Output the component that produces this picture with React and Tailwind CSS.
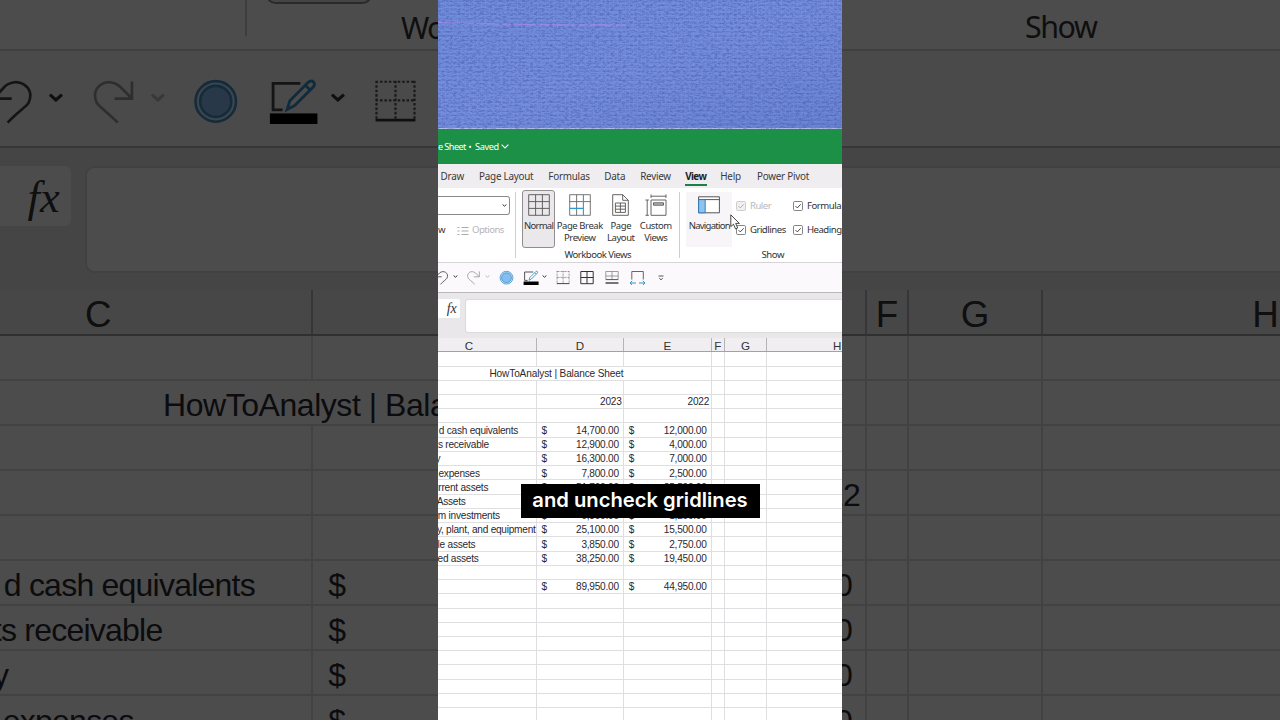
import React from "react";

const ROWS = [
  [],
  ["title"],
  [],
  ["year"],
  [],
  ["d cash equivalents", "14,700.00", "12,000.00"],
  ["ts receivable", "12,900.00", "4,000.00"],
  ["ry", "16,300.00", "7,000.00"],
  ["d expenses", "7,800.00", "2,500.00"],
  ["urrent assets", "51,700.00", "25,500.00"],
  ["m Assets"],
  ["rm investments", "9,300.00", "1,200.00"],
  ["y, plant, and equipment", "25,100.00", "15,500.00"],
  ["le assets", "3,850.00", "2,750.00"],
  ["xed assets", "38,250.00", "19,450.00"],
  [],
  ["", "89,950.00", "44,950.00"],
  [], [], [], [], [], [], [], [], [], [],
];

const LABEL_END = {
  5: "pr-[17.7px]",
  6: "pr-[46.9px]",
  7: "pr-[95.6px]",
  8: "pr-[56px]",
  9: "pr-[47.6px]",
  10: "pr-[70.2px]",
  11: "pr-[36px]",
  12: "pr-[0.2px]",
  13: "pr-[60.5px]",
  14: "pr-[57.2px]",
};

const LINE = "border-[#dfdee1]";

function Money({ value }) {
  return (
    <div className="flex w-full justify-between pl-[4.8px] pr-[4.2px]">
      {value && <span>$</span>}
      {value && <span>{value}</span>}
    </div>
  );
}

function Row({ index, cells }) {
  const kind = cells[0];
  return (
    <div className={"flex h-[14.24px] shrink-0 border-b-[0.7px] " + LINE}>
      {kind === "title" ? (
        <div className="flex w-[186px] shrink-0 items-center justify-end pt-[1.6px] pr-[0.6px] whitespace-nowrap">
          <span className="tracking-[-0.14px]">HowToAnalyst | Balance Sheet</span>
        </div>
      ) : (
        <>
          <div className={"flex w-[98.8px] shrink-0 items-center justify-end whitespace-nowrap border-r-[0.7px] pt-[1.6px] " + LINE + " " + (LABEL_END[index] || "")}>
            {kind !== "year" && <span className="shrink-0">{kind}</span>}
          </div>
          <div className={"flex w-[87.2px] shrink-0 items-center border-r-[0.7px] pt-[1.6px] " + LINE}>
            {kind === "year" ? <span className="ml-auto pr-[1.4px]">2023</span> : <Money value={cells[1]} />}
          </div>
        </>
      )}
      <div className={"flex w-[87.8px] shrink-0 items-center border-r-[0.7px] pt-[1.6px] " + LINE}>
        {kind === "year" ? <span className="ml-auto pr-[1.7px]">2022</span> : <Money value={cells[2]} />}
      </div>
      <div className={"w-[13px] shrink-0 border-r-[0.7px] " + LINE} />
      <div className={"w-[42.5px] shrink-0 border-r-[0.7px] " + LINE} />
      <div className="grow" />
    </div>
  );
}

function Head({ children, className }) {
  return (
    <div className={"flex h-full shrink-0 items-center justify-center border-r-[0.7px] border-[#b5b3b7] pt-[2.2px] " + className}>
      {children}
    </div>
  );
}

function Fabric({ id }) {
  return (
    <svg className="block h-[128.5px] w-full shrink-0" viewBox="0 0 404 128.5" preserveAspectRatio="none">
      <defs>
        <linearGradient id={id + "g"} x1="0" y1="0" x2="1" y2="1">
          <stop offset="0" stopColor="#718ddc" />
          <stop offset="0.5" stopColor="#768ede" />
          <stop offset="1" stopColor="#6b84d3" />
        </linearGradient>
        <filter id={id + "n"} x="0" y="0" width="100%" height="100%" colorInterpolationFilters="sRGB">
          <feTurbulence type="fractalNoise" baseFrequency="0.26 0.6" numOctaves="3" seed="7" />
          <feColorMatrix values="0 0 0 0 0.24  0 0 0 0 0.3  0 0 0 0 0.63  4 0 0 0 -1.8" />
        </filter>
        <pattern id={id + "w"} width="4" height="4.4" patternUnits="userSpaceOnUse">
          <path d="M0 1h3" stroke="#3e51a4" strokeWidth="0.9" opacity="0.4" />
        </pattern>
      </defs>
      <rect width="404" height="128.5" fill={"url(#" + id + "g)"} />
      <rect width="404" height="128.5" fill={"url(#" + id + "w)"} />
      <rect width="404" height="128.5" filter={"url(#" + id + "n)"} opacity="0.34" />
      <path d="M0 22.5l60 1.5 70 1 60 0" fill="none" stroke="#b08ae6" strokeWidth="1.3" strokeDasharray="22 4 9 3" opacity="0.6" />
    </svg>
  );
}

function Chevron({ className, color = "#333" }) {
  return (
    <svg className={"shrink-0 " + className} viewBox="0 0 5 3" fill="none" stroke={color} strokeWidth="1">
      <path d="M0.6 0.5L2.5 2.2L4.4 0.5" />
    </svg>
  );
}

function Check({ label, muted }) {
  return (
    <div className={"flex h-[12px] items-center gap-[3.6px] whitespace-nowrap text-[9.6px] tracking-[-0.48px] " + (muted ? "text-[#b9b7ba]" : "text-[#333]")}>
      <svg className="size-[10px] shrink-0" viewBox="0 0 10 10" fill="none">
        <rect x="0.5" y="0.5" width="9" height="9" rx="1.2" fill={muted ? "#f1f0f1" : "#fff"} stroke={muted ? "#c4c2c5" : "#666"} strokeWidth="0.8" />
        <path d="M2.5 5.1l1.8 1.8 3.4-3.6" stroke={muted ? "#aaa" : "#333"} strokeWidth="0.9" />
      </svg>
      {label}
    </div>
  );
}

function BigButton({ icon, lines, tight, className }) {
  return (
    <div className={"flex shrink-0 flex-col items-center whitespace-nowrap text-center text-[9.5px] leading-[12px] text-[#333] " + (tight ? "tracking-[-0.72px] " : "tracking-[-0.42px] ") + className}>
      <div className="flex h-[24px] items-center justify-center">{icon}</div>
      <div className="mt-[3px] flex flex-col items-center">
        {lines.map((l) => (
          <span key={l}>{l}</span>
        ))}
      </div>
    </div>
  );
}

const gridIcon = (
  <svg className="h-[22px] w-[22px]" viewBox="0 0 22 22" fill="none" stroke="#555" strokeWidth="0.9">
    <path d="M0.7 0.7h20.6v20.6H0.7zM7.6 0.7v20.6M14.4 0.7v20.6M0.7 7.6h20.6M0.7 14.4h20.6" />
  </svg>
);
const breakIcon = (
  <svg className="h-[22px] w-[22px]" viewBox="0 0 22 22" fill="none" strokeWidth="0.9">
    <path d="M0.7 0.7h20.6v20.6H0.7zM7.6 0.7v13.7M0.7 7.6h13.7M14.4 7.6h6.9M7.6 14.4v6.9" stroke="#666" />
    <path d="M14.4 0.7v20.6M0.7 14.4h13.7" stroke="#2f9ad0" strokeWidth="1.1" />
  </svg>
);
const pageIcon = (
  <svg className="h-[22px] w-[17px]" viewBox="0 0 17 22" fill="none" stroke="#555" strokeWidth="0.9">
    <path d="M0.7 0.7h10l5.6 5.6v15H0.7zM10.7 0.7v5.6h5.6M3.4 9h10v9.4h-10zM3.4 12.1h10M3.4 15.2h10M8.4 9v9.4" />
  </svg>
);
const customIcon = (
  <svg className="h-[22px] w-[22px]" viewBox="0 0 22 22" fill="none" stroke="#555" strokeWidth="0.9">
    <path d="M6 2.2h15M6 0.5v3.4M21 0.5v3.4M2.2 6v15.3M0.5 6h3.4M0.5 21.3h3.4M6 6h15v15.3H6z" />
    <path d="M8.5 8.8h10v2.4h-10z" fill="#bbb" />
  </svg>
);
const navIcon = (
  <svg className="h-[18px] w-[22px]" viewBox="0 0 22 18" fill="none" stroke="#444" strokeWidth="0.9">
    <path d="M0.6 0.8h20.8v16H0.6zM0.6 3.6h20.8" fill="#fff" />
    <path d="M0.6 3.6h6.6v13.2H0.6z" fill="#8dc3ee" stroke="#2a77b8" />
  </svg>
);

function QuickAccess() {
  const icon = "h-[15px] shrink-0";
  return (
    <div className="flex h-[30.5px] shrink-0 items-center border-b-[0.9px] border-[#bcbabd] bg-[#fbf9fc] pt-[1.2px]">
      <svg className={icon + " w-[10.5px]"} viewBox="0 0 10.5 15" fill="none" stroke="#444" strokeWidth="0.85">
        <path d="M-2 6.8H3.7M-2 6.8L1.5 3C5.3 -0.4 11.5 3 9 8.2C8.6 9 4.5 12 2.4 14.4" />
      </svg>
      <Chevron className="mb-[1.8px] ml-[4.7px] h-[3px] w-[5px]" />
      <svg className={icon + " ml-[9.3px] w-[13px]"} viewBox="0 0 13 15" fill="none" stroke="#999" strokeWidth="0.85">
        <path d="M12.3 1.4V6.8H6.8M12.3 6.8L8.5 3C4.6 -0.4 -1.2 3 1.2 8.2C1.7 9.2 5.6 12 7.8 14.4" />
      </svg>
      <Chevron className="mb-[1.8px] ml-[5px] h-[3px] w-[5px]" color="#bbb" />
      <svg className="ml-[8.1px] size-[15px] shrink-0" viewBox="0 0 15 15" fill="none" stroke="#3f8fcb">
        <circle cx="7.5" cy="7.7" r="6.4" fill="#cfe6f8" strokeWidth="0.8" />
        <circle cx="7.5" cy="7.7" r="4.9" fill="#85bdf0" strokeWidth="0.8" />
      </svg>
      <svg className={icon + " ml-[9.1px] w-[16px]"} viewBox="0 0 16 15" fill="none">
        <path d="M10.2 2H1.6v8.4h3" stroke="#444" strokeWidth="0.9" />
        <path d="M6 10.3l0.9-2.8 6-6c1.2-0.7 2.2 0.4 1.5 1.5l-6 6zM11.8 2.6l1.5 1.5" fill="#fff" stroke="#3a92c8" strokeWidth="0.9" />
        <rect x="0.6" y="11.5" width="15" height="3.5" fill="#000" />
      </svg>
      <Chevron className="mb-[1.8px] ml-[3.5px] h-[3px] w-[5px]" />
      <svg className={icon + " ml-[8.4px] w-[14px]"} viewBox="0 0 14 15" fill="none" stroke="#555">
        <path d="M0.8 1.5h12.6M1.1 1.2v12M7.1 1.2v12M13.1 1.2v12M0.8 7.4h12.6" strokeWidth="0.7" strokeDasharray="0.8 0.6" />
        <path d="M0.8 13.6h12.6" stroke="#333" strokeWidth="0.9" />
      </svg>
      <svg className={icon + " ml-[10.6px] w-[14px]"} viewBox="0 0 14 15" fill="none" stroke="#333" strokeWidth="1">
        <path d="M0.8 1.5h12.4v12.2H0.8zM7 1.5v12.2M0.8 7.5h12.4" />
      </svg>
      <svg className={icon + " ml-[10.8px] w-[14px]"} viewBox="0 0 14 15" fill="none" stroke="#777">
        <path d="M0.8 1.5h12.4v8M0.8 1.5v8M7 1.5v8M0.8 6h12.4" strokeWidth="0.7" />
        <path d="M0.8 9.6h12.4" stroke="#555" strokeWidth="1" />
        <path d="M0.5 13h13" stroke="#666" strokeWidth="1.8" />
      </svg>
      <svg className={icon + " ml-[9.7px] w-[17px]"} viewBox="0 0 17 15" fill="none">
        <path d="M2.8 9.5V1.5h11.5v8" stroke="#555" strokeWidth="0.9" />
        <path d="M1 13h6M3.2 10.9L1 13l2.2 2.1M10 13h6M13.8 10.9L16 13l-2.2 2.1" stroke="#3296c8" strokeWidth="1" />
      </svg>
      <svg className="ml-[12.6px] h-[6px] w-[6px] shrink-0" viewBox="0 0 6 6" fill="none" stroke="#444" strokeWidth="0.9">
        <path d="M0.5 1h5M1.2 3.1L3 4.8l1.8-1.7" />
      </svg>
    </div>
  );
}

const TABS = [
  ["Draw", "ml-[3px] w-[22.5px]"],
  ["Page Layout", "ml-[15.5px] w-[54.5px]"],
  ["Formulas", "ml-[15.5px] w-[40px]"],
  ["Data", "ml-[15.5px] w-[20.5px]"],
  ["Review", "ml-[15px] w-[31px]"],
  ["View", "ml-[14px] w-[21.5px]"],
  ["Help", "ml-[14px] w-[20px]"],
  ["Power Pivot", "ml-[16.5px] w-[52px]"],
];

function Screen({ id, children }) {
  return (
    <div className="relative flex h-[720px] w-[404px] shrink-0 flex-col overflow-hidden bg-white font-['Noto_Sans',sans-serif] text-[#333]">
      <Fabric id={id} />
      <div className="flex h-[35.5px] shrink-0 items-center bg-[#1b9046] pt-[1.4px] text-[9.2px] whitespace-nowrap text-white">
        <span className="w-[27px] shrink-0 tracking-[-0.6px]">e Sheet</span>
        <span className="ml-[3.4px] w-[3px] text-[8px]">•</span>
        <span className="ml-[3.6px] w-[23.5px] tracking-[-0.4px]">Saved</span>
        <svg className="ml-[3px] h-[5px] w-[8px]" viewBox="0 0 8 5" fill="none" stroke="#fff" strokeWidth="1.1">
          <path d="M0.6 0.7L4 4L7.4 0.7" />
        </svg>
      </div>

      <div className="flex h-[23.5px] shrink-0 items-center bg-[#efedf0] text-[9.9px] tracking-[-0.25px] text-[#3a3a3a]">
        {TABS.map(([name, pos]) => (
          <div
            key={name}
            className={"flex h-[21.4px] shrink-0 items-center justify-center whitespace-nowrap border-b-[2px] pt-[2.8px] " + pos + " " + (name === "View" ? "border-[#1a7f48] font-bold tracking-[-0.6px] text-[#222]" : "border-transparent")}
          >
            {name}
          </div>
        ))}
      </div>

      <div className="flex h-[75px] shrink-0 border-b-[0.9px] border-[#d6d4d7] bg-white text-[9.6px] tracking-[-0.45px]">
        <div className="my-[4px] flex w-[77.8px] shrink-0 flex-col border-r-[0.7px] border-[#cfcdd0]">
          <div className="mt-[4.5px] flex h-[18.5px] w-[72px] items-center justify-end rounded-r-[3px] border-[0.8px] border-l-0 border-[#8b898c] pr-[2.5px]">
            <Chevron className="h-[3px] w-[5px]" />
          </div>
          <div className="mt-[9px] flex h-[14px] items-center whitespace-nowrap">
            <span className="w-[8px]">w</span>
            <svg className="ml-[11px] h-[10px] w-[12px]" viewBox="0 0 12 10" fill="none" stroke="#aaa" strokeWidth="1">
              <path d="M0.5 1.5h2M0.5 5h2M0.5 8.5h2M4.5 1.5h7M4.5 5h7M4.5 8.5h7" />
            </svg>
            <span className="ml-[3px] tracking-[-0.55px] text-[#b6b4b7]">Options</span>
          </div>
        </div>

        <div className="my-[4px] flex w-[164px] shrink-0 flex-col border-r-[0.7px] border-[#cfcdd0]">
          <div className="-mt-[1.5px] flex h-[58px]">
            <BigButton tight icon={gridIcon} lines={["Normal"]} className="ml-[6px] h-[57.5px] w-[33.5px] rounded-[3px] border-[0.8px] border-[#8f8d90] bg-[#eae8eb] pt-[1.7px]" />
            <BigButton icon={breakIcon} lines={["Page Break", "Preview"]} className="w-[49px] pt-[2.5px]" />
            <BigButton icon={pageIcon} lines={["Page", "Layout"]} className="w-[33px] pt-[2.5px]" />
            <BigButton icon={customIcon} lines={["Custom", "Views"]} className="w-[37px] pt-[2.5px]" />
          </div>
          <div className="mt-[1.2px] flex h-[13px] items-center justify-center pl-[0.8px] tracking-[-0.55px]">Workbook Views</div>
        </div>

        <div className="my-[4px] flex shrink-0 flex-col pl-[6.5px]">
          <div className="flex h-[56.5px]">
            <BigButton tight icon={navIcon} lines={["Navigation"]} className="h-[55px] w-[46px] bg-[#f7f5f7] pt-[1px]" />
            <div className="mt-[8.6px] ml-[4px] flex w-[57px] flex-col gap-[12px]">
              <Check label="Ruler" muted />
              <Check label="Gridlines" />
            </div>
            <div className="mt-[8.6px] flex flex-col gap-[12px]">
              <Check label="Formula Bar" />
              <Check label="Headings" />
            </div>
          </div>
          <div className="mt-[1.9px] flex h-[13px] w-[173px] items-center justify-center">Show</div>
        </div>
      </div>

      <QuickAccess />

      <div className="flex h-[45px] shrink-0 items-start gap-[4.5px] bg-[#e9e7ea] pt-[5.7px]">
        <div className="flex h-[19px] w-[22.3px] shrink-0 items-center justify-end rounded-r-[2px] bg-white pt-[1px] pr-[3.5px]">
          <span className="font-['Liberation_Serif',serif] text-[14px] leading-none font-normal italic">fx</span>
        </div>
        <div className="h-[34px] grow rounded-l-[3px] border-[0.7px] border-r-0 border-[#dcdadd] bg-white" />
      </div>

      <div className="flex h-[14.3px] shrink-0 border-b-[0.9px] border-[#a3a1a4] bg-[#f0eef1] font-['Liberation_Sans',sans-serif] text-[11.6px] leading-none text-[#333]">
        <Head className="-ml-[36.2px] w-[135px]">C</Head>
        <Head className="w-[87.2px]">D</Head>
        <Head className="w-[87.8px]">E</Head>
        <Head className="w-[13px]">F</Head>
        <Head className="w-[42.5px]">G</Head>
        <Head className="w-[141px]">H</Head>
      </div>

      <div className="flex flex-col font-['Liberation_Sans',sans-serif] text-[10.1px] leading-none tracking-[-0.24px] text-[#2b2930]">
        {ROWS.map((cells, i) => (
          <Row key={i} index={i} cells={cells} />
        ))}
      </div>
      {children}
    </div>
  );
}

export default function App() {
  return (
    <div className="relative flex h-[720px] w-[1280px] justify-center overflow-hidden bg-black">
      <div aria-hidden="true" className="absolute inset-0 flex items-center justify-center overflow-hidden">
        <div className="shrink-0 [zoom:3.168]">
          <Screen id="back" />
        </div>
      </div>
      <div className="absolute inset-0 bg-black/70" />
      <Screen id="front">
        <svg className="absolute top-[214px] left-[291.5px] h-[17px] w-[11px]" viewBox="0 0 11 17" fill="#fff" stroke="#333" strokeWidth="0.9">
          <path d="M0.8 0.8v11.8l2.7-2.4 2 4.7 2.2-0.9-2-4.6h3.7z" />
        </svg>
        <div className="absolute top-[483.5px] left-[82.5px] flex h-[34px] w-[239px] items-center justify-center bg-black font-['Inter',sans-serif] text-[20.2px] font-semibold whitespace-nowrap text-white">
          and uncheck gridlines
        </div>
      </Screen>
    </div>
  );
}
